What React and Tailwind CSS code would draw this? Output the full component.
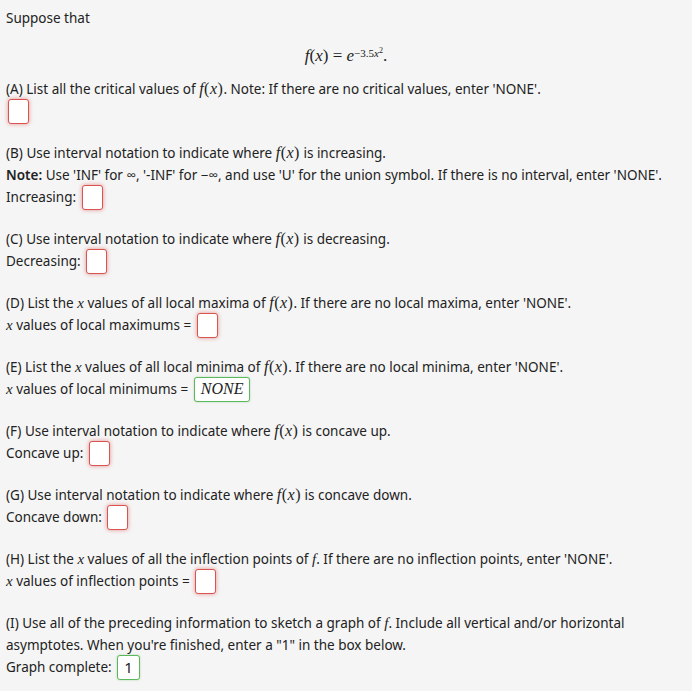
import React from 'react';

const SERIF = { fontFamily: '"Liberation Serif", "DejaVu Serif", serif' };

const M = ({ children }) => (
  <span className="italic text-[15px]" style={SERIF}>{children}</span>
);

const Fx = () => (
  <span style={SERIF} className="text-[16px] tracking-[0.5px]">
    <i>f</i>(<i>x</i>)
  </span>
);

function Box({ value, ok }) {
  return (
    <span
      className={`inline-flex items-center justify-center align-middle h-[25px] ml-[2px] rounded-[3px] bg-white border ${
        ok
          ? 'border-[#5cb85c] px-[6px] shadow-[0_0_2px_rgba(92,184,92,0.5)]'
          : 'border-[#d9534f] w-[21px] shadow-[0_0_4px_rgba(217,83,79,0.6)]'
      }`}
    >
      {value}
    </span>
  );
}

const Line = ({ children }) => <div className="h-[22px] flex items-center whitespace-pre">{children}</div>;

function Section({ children }) {
  return <div className="mb-[20px]">{children}</div>;
}

export default function App() {
  return (
    <div
      className="min-h-screen bg-[#f5f5f5] text-[#222] text-[13.5px] px-[6px] pt-[7px]"
      style={{ fontFamily: '"Noto Sans", "Open Sans", sans-serif' }}
    >
      <Line>Suppose that</Line>
      <div className="flex justify-center h-[49px] items-center pt-[4px] text-[17px]" style={SERIF}>
        <span>
          <i>f</i>(<i>x</i>) = <i>e</i>
          <sup className="text-[11px] relative -top-[4px]">−3.5<i>x</i><sup className="text-[8px]">2</sup></sup>.
        </span>
      </div>

      <Section>
        <Line>(A) List all the critical values of <Fx />. Note: If there are no critical values, enter 'NONE'.</Line>
        <Line><Box /></Line>
      </Section>

      <Section>
        <Line>(B) Use interval notation to indicate where <Fx /> is increasing.</Line>
        <Line><b className="font-semibold">Note:</b> Use 'INF' for ∞, '-INF' for −∞, and use 'U' for the union symbol. If there is no interval, enter 'NONE'.</Line>
        <Line>Increasing: <Box /></Line>
      </Section>

      <Section>
        <Line>(C) Use interval notation to indicate where <Fx /> is decreasing.</Line>
        <Line>Decreasing: <Box /></Line>
      </Section>

      <Section>
        <Line>(D) List the <M>x</M> values of all local maxima of <Fx />. If there are no local maxima, enter 'NONE'.</Line>
        <Line><M>x</M> values of local maximums = <Box /></Line>
      </Section>

      <Section>
        <Line>(E) List the <M>x</M> values of all local minima of <Fx />. If there are no local minima, enter 'NONE'.</Line>
        <Line><M>x</M> values of local minimums = <Box ok value={<span className="italic text-[16px]" style={SERIF}>NONE</span>} /></Line>
      </Section>

      <Section>
        <Line>(F) Use interval notation to indicate where <Fx /> is concave up.</Line>
        <Line>Concave up: <Box /></Line>
      </Section>

      <Section>
        <Line>(G) Use interval notation to indicate where <Fx /> is concave down.</Line>
        <Line>Concave down: <Box /></Line>
      </Section>

      <Section>
        <Line>(H) List the <M>x</M> values of all the inflection points of <M>f</M>. If there are no inflection points, enter 'NONE'.</Line>
        <Line><M>x</M> values of inflection points = <Box /></Line>
      </Section>

      <Section>
        <Line>(I) Use all of the preceding information to sketch a graph of <M>f</M>. Include all vertical and/or horizontal</Line>
        <Line>asymptotes. When you're finished, enter a "1" in the box below.</Line>
        <Line>Graph complete: <Box ok value={<span className="text-[15px]">1</span>} /></Line>
      </Section>
    </div>
  );
}
